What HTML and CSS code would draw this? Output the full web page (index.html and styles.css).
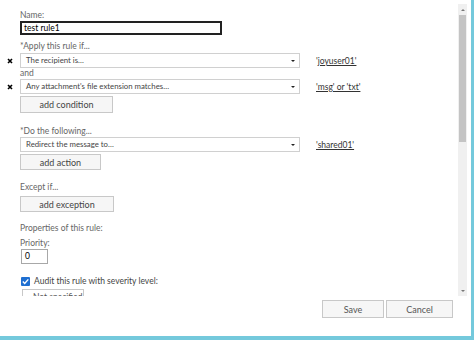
FILE: index.html
```html
<!DOCTYPE html>
<html lang="en">
<head>
    <meta charset="UTF-8">
    <title>New rule</title>
    <link rel="stylesheet" href="styles.css">
</head>
<body>
    <div class="dialog">
        <div class="content">
            <div class="form">
                <div class="label first">Name:</div>
                <div class="name-input">test rule1</div>

                <div class="label apply">*Apply this rule if...</div>
                <div class="cond-row">
                    <span class="remove"><svg width="6" height="6" viewBox="0 0 6 6"><path d="M1 1L5 5M5 1L1 5" stroke="#000" stroke-width="1.6"/></svg></span>
                    <div class="select">The recipient is…<span class="arrow"></span></div>
                    <a href="#" class="value">'joyuser01'</a>
                </div>
                <div class="label and">and</div>
                <div class="cond-row">
                    <span class="remove"><svg width="6" height="6" viewBox="0 0 6 6"><path d="M1 1L5 5M5 1L1 5" stroke="#000" stroke-width="1.6"/></svg></span>
                    <div class="select">Any attachment's file extension matches…<span class="arrow"></span></div>
                    <a href="#" class="value">'msg' or 'txt'</a>
                </div>
                <button class="btn add-condition">add condition</button>

                <div class="label section">*Do the following...</div>
                <div class="cond-row">
                    <span class="remove"></span>
                    <div class="select">Redirect the message to…<span class="arrow"></span></div>
                    <a href="#" class="value">'shared01'</a>
                </div>
                <button class="btn add-action">add action</button>

                <div class="label except">Except if...</div>
                <button class="btn add-exception">add exception</button>

                <div class="label props">Properties of this rule:</div>
                <div class="label priority">Priority:</div>
                <div class="priority-input">0</div>

                <div class="audit">
                    <span class="checkbox"><svg width="9" height="9" viewBox="0 0 9 9"><path d="M1.8 4.6L3.7 6.5L7.3 2.4" stroke="#fff" stroke-width="1.4" fill="none"/></svg></span>
                    <span>Audit this rule with severity level:</span>
                </div>
                <div class="severity">Not specified</div>
            </div>
            <div class="scrollbar">
                <div class="sb-up"><span></span></div>
                <div class="sb-thumb"></div>
                <div class="sb-track"></div>
                <div class="sb-down"><span></span></div>
            </div>
        </div>
        <div class="footer">
            <button class="btn save">Save</button>
            <button class="btn cancel">Cancel</button>
        </div>
    </div>
</body>
</html>
```

FILE: styles.css
```css
body {
    margin: 0;
    padding: 0;
    background-color: white;
    font-family: Lato, "Open Sans", sans-serif;
    font-size: 8.5px;
    color: #333;
}
.dialog {
    width: 471px;
    height: 336px;
    border-right: 3px solid #74c9dc;
    border-bottom: 4px solid #74c9dc;
    display: flex;
    flex-direction: column;
}
.content {
    height: 296px;
    display: flex;
}
.form {
    flex: 1;
    overflow: hidden;
    padding: 10px 0 0 20px;
}
.label {
    color: #666;
    line-height: 12px;
    height: 12px;
    white-space: nowrap;
}
.label.first {
    height: 11px;
    line-height: 11px;
}
.name-input {
    width: 196px;
    height: 10px;
    line-height: 10px;
    border: 2px solid #222;
    padding: 0 0 0 2px;
    color: #000;
}
.label.apply { margin-top: 5px; }
.label.and { height: 11px; line-height: 11px; }
.label.section { margin-top: 12px; }
.label.except { margin-top: 11px; }
.label.props { margin-top: 10px; }
.label.priority { margin-top: 3px; }
.cond-row {
    display: flex;
    align-items: center;
    margin-left: -20px;
    height: 15px;
}
.label.apply + .cond-row { margin-top: 1px; }
.remove {
    width: 20px;
    display: flex;
    justify-content: center;
}
.select {
    width: 273px;
    height: 13px;
    line-height: 13px;
    border: 1px solid #d0d0d0;
    padding-left: 5px;
    position: relative;
    color: #444;
    font-size: 7.8px;
}
.arrow {
    position: absolute;
    right: 4px;
    top: 6px;
    border-left: 2px solid transparent;
    border-right: 2px solid transparent;
    border-top: 2px solid #222;
}
.value {
    margin-left: 16px;
    color: #333;
    text-decoration: underline;
}
.btn {
    display: block;
    font-family: inherit;
    font-size: 9px;
    color: #444;
    background: #f6f6f6;
    border: 1px solid #c8c8c8;
    padding: 0;
}
.add-condition {
    margin-top: 2px;
    width: 93px;
    height: 17px;
}
.add-action {
    margin-top: 2px;
    width: 81px;
    height: 16px;
}
.add-exception {
    margin-top: 3px;
    width: 94px;
    height: 16px;
}
.priority-input {
    margin-left: 1px;
    width: 22px;
    height: 13px;
    line-height: 13px;
    border: 1px solid #a8a8a8;
    padding-left: 3px;
    color: #000;
}
.audit {
    margin-top: 11px;
    height: 12px;
    display: flex;
    align-items: center;
    gap: 4px;
    margin-left: 1px;
    color: #444;
}
.checkbox {
    width: 9px;
    height: 9px;
    background: #1f6fd1;
    border-radius: 1px;
    display: flex;
}
.severity {
    margin-top: 2px;
    margin-left: 2px;
    width: 50px;
    height: 14px;
    line-height: 14px;
    border: 1px solid #c8c8c8;
    padding-left: 10px;
    color: #555;
}
.scrollbar {
    width: 9px;
    margin: 4px 4px 0 0;
    display: flex;
    flex-direction: column;
    background: #f0f0f0;
}
.sb-up, .sb-down {
    height: 11px;
    display: flex;
    justify-content: center;
    align-items: center;
}
.sb-up span {
    border-left: 2px solid transparent;
    border-right: 2px solid transparent;
    border-bottom: 2px solid #777;
}
.sb-down span {
    border-left: 2px solid transparent;
    border-right: 2px solid transparent;
    border-top: 2px solid #777;
}
.sb-thumb {
    height: 127px;
    background: #c4c4c4;
    margin: 0 1px;
}
.sb-track {
    flex: 1;
}
.footer {
    flex: 1;
    display: flex;
    justify-content: flex-end;
    align-items: flex-start;
    padding: 4px 18px 0 0;
    gap: 2px;
}
.save {
    width: 62px;
    height: 18px;
    color: #555;
}
.cancel {
    width: 67px;
    height: 18px;
    color: #555;
}
```
